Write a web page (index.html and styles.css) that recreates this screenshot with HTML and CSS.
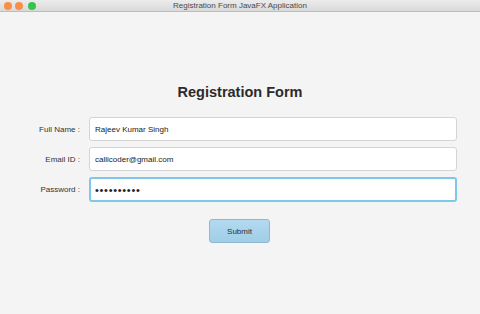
FILE: index.html
```
<!DOCTYPE html>
<html>
<head>
<meta charset="utf-8">
<link rel="stylesheet" href="styles.css">
</head>
<body>
<div class="window">
  <div class="titlebar">
    <div class="lights">
      <span class="light close"></span>
      <span class="light min"></span>
      <span class="light max"></span>
    </div>
    <div class="wintitle">Registration Form JavaFX Application</div>
  </div>
  <div class="content">
    <h1 class="heading">Registration Form</h1>
    <div class="form">
      <label class="label">Full Name :</label>
      <input class="field" type="text" value="Rajeev Kumar Singh">
      <label class="label">Email ID :</label>
      <input class="field" type="text" value="callicoder@gmail.com">
      <label class="label">Password :</label>
      <input class="field focused" type="password" value="abcdefghij">
    </div>
    <div class="actions">
      <button class="submit">Submit</button>
    </div>
  </div>
</div>
</body>
</html>
```
FILE: styles.css
```
html, body {
  margin: 0;
  padding: 0;
  background: #f4f4f4;
  font-family: "Liberation Sans", Arial, sans-serif;
}
.window {
  width: 480px;
  height: 314px;
  display: flex;
  flex-direction: column;
  overflow: hidden;
}
.titlebar {
  position: relative;
  height: 11px;
  background: linear-gradient(#ececec, #d9d9d9);
  border-bottom: 1px solid #bdbdbd;
  display: flex;
  align-items: center;
  justify-content: center;
}
.lights {
  position: absolute;
  left: 4px;
  top: 2px;
  display: flex;
  gap: 3px;
}
.light {
  width: 8px;
  height: 8px;
  border-radius: 50%;
  display: block;
}
.close, .min { background: #f98e47; }
.max { background: #35c649; margin-left: 2px; }
.wintitle {
  font-size: 8px;
  color: #4a4a4a;
  line-height: 11px;
}
.content {
  flex: 1;
  display: flex;
  flex-direction: column;
  padding-top: 70px;
}
.heading {
  margin: 0;
  text-align: center;
  font-size: 14.5px;
  line-height: 20px;
  font-weight: bold;
  color: #2b2b2b;
}
.form {
  display: grid;
  grid-template-columns: 80px 368px;
  column-gap: 9px;
  row-gap: 6px;
  margin-top: 15px;
}
.label {
  text-align: right;
  font-size: 8px;
  color: #333;
  align-self: center;
}
.field {
  box-sizing: border-box;
  height: 24px;
  margin: 0;
  border: 1px solid #d4d4d4;
  border-radius: 3px;
  background: #fff;
  padding: 0 5px;
  font-family: "Liberation Sans", Arial, sans-serif;
  font-size: 8px;
  color: #222;
  outline: none;
}
.focused {
  height: 25px;
  border: 2px solid #7ec6ea;
  padding: 0 4px;
  font-size: 11px;
  letter-spacing: 0.7px;
}
.actions {
  display: flex;
  justify-content: center;
  margin-top: 17px;
  padding-right: 1px;
}
.submit {
  box-sizing: border-box;
  width: 61px;
  height: 24px;
  border: 1px solid #8fb9d2;
  border-radius: 3px;
  background: linear-gradient(#b3daef, #a0cde6);
  font-family: "Liberation Sans", Arial, sans-serif;
  font-size: 8px;
  color: #2e2e2e;
  padding: 0;
}
```
